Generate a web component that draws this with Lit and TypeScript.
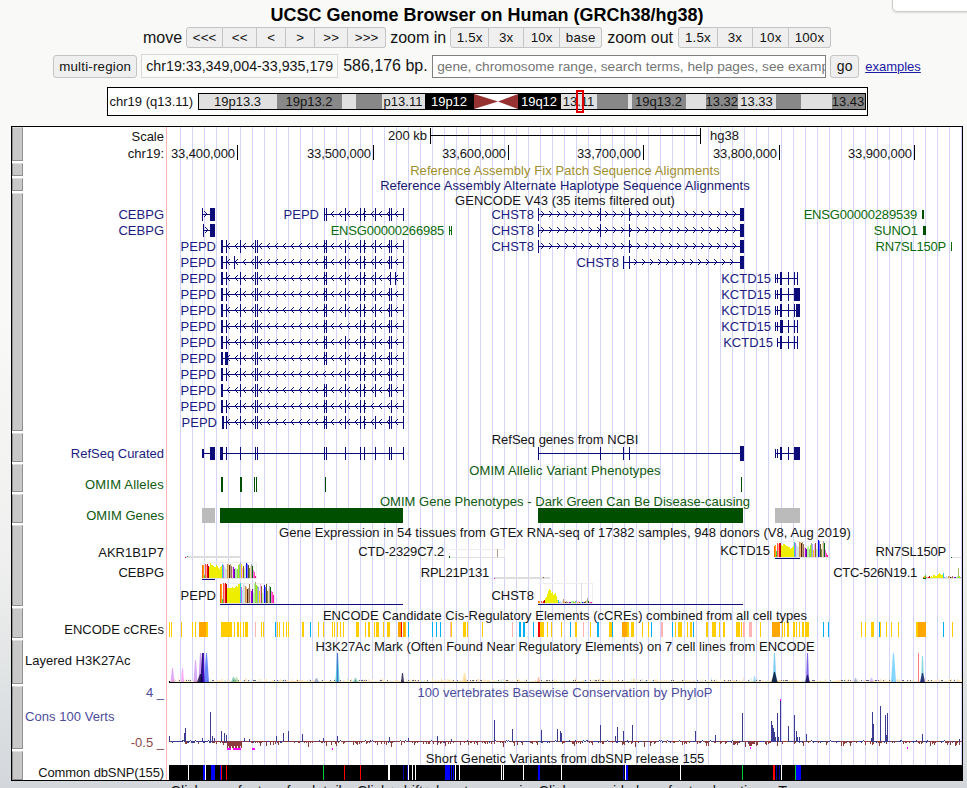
import { LitElement, html, css, svg } from "lit";
import { customElement } from "lit/decorators.js";

const NAVY = "#0b0b7a";
const LBL = "#1c1c80";
const GREEN = "#0b6b0b";
const DKG = "#005000";

class Paint {
  m = new Map<string, string>();
  r(c: string, x: number, y: number, w: number, h: number) {
    this.m.set(c, (this.m.get(c) || "") + `M${x} ${y}h${w}v${h}h${-w}z`);
  }
  render() {
    return [...this.m.entries()].map(([c, d]) => svg`<path class="crisp" fill=${c} d=${d}></path>`);
  }
}

let seed = 7;
const rnd = () => {
  seed = (seed * 16807) % 2147483647;
  return seed / 2147483647;
};

const GTEX = ["#FF6600","#FFAA00","#33DD33","#FF5555","#FFAA99","#FF0000","#AA0000",
  ...Array(13).fill("#EEEE00"),"#33CCCC","#CC66FF","#AAEEFF","#DDDDDD","#DDDDDD","#CC9955","#EEBB77",
  "#552200","#BB9988","#997755","#FFCCCC","#9900FF","#660099","#AAFF99","#AAFF99","#AABB66","#99FF00","#99BB88",
  "#AAAAFF","#FFD700","#FFAAFF","#995522","#AAFF99","#DDDDDD","#0000FF","#7777FF","#555522","#778855","#FFDD99",
  "#AAAAAA","#006600","#FF66FF","#FF5599","#FF00BB"];

const H_CEBPG = [13,13,3,14,13,14,12,11,15,13,13,12,11,11,13,12,10,9,11,12,14,13,11,10,9,14,14,13,14,12,11,11,9,10,9,9,13,14,16,14,10,12,9,13,15,14,13,10,12,14,12,8,6,2];
const H_PEPD = [19,19,4,20,19,20,19,15,15,15,15,15,16,15,15,16,17,16,19,19,20,16,13,19,18,17,16,14,15,19,14,12,14,10,19,21,18,17,16,12,19,17,10,14,18,16,19,12,14,17,16,12,11,8];
const H_KCTD = [11,12,6,14,13,14,14,12,11,13,13,12,11,11,10,10,8,9,10,11,15,14,12,11,10,15,15,14,15,13,10,9,8,10,11,8,12,14,13,7,13,14,8,13,17,16,13,8,14,16,14,7,4,2];
const H_CHST = [2,2,0,2,1,2,3,5,6,9,12,14,13,10,11,8,9,10,7,3,3,1,2,1,2,4,2,1,2,1,1,1,1,2,2,2,1,2,3,1,2,1,1,20,1,1,1,2,3,5,2,1,1,1];
const H_CTC = [1,2,3,1,1,1,2,1,2,1,3,3,2,2,3,4,5,4,3,3,5,1,1,2,1,2,2,1,1,2,1,1,1,1,2,10,2,1,1,3,6,3,1];

const PEPD_BASE = [226,240,255,257,324,326,345,360,364,375,389,391,403];

@customElement("track-image")
class TrackImage extends LitElement {
  static styles = css`
    :host { display: block; width: 939px; height: 653px; }
    svg { display: block; font-family: "Liberation Sans", Arial, sans-serif; font-size: 13px; }
    .crisp { shape-rendering: crispEdges; }
    .arrows { fill: none; stroke-width: 1; shape-rendering: crispEdges; }
  `;

  render() {
    const p = new Paint();
    const t: any[] = [];
    const txt = (x: number, y: number, s: string, a = "end", f = "#141414", ls = 0) =>
      t.push(svg`<text x=${x} y=${y} text-anchor=${a} fill=${f} letter-spacing=${ls}>${s}</text>`);
    let arrowsL = "", arrowsR = "";

    // guide lines
    for (let i = 0; i < 66; i++) p.r("#d4d4fb", Math.round(180 + 12.01 * i), 127, 1, 653);
    p.r("#ffb4b4", 166, 127, 1, 653);

    // ruler
    txt(164, 141, "Scale");
    txt(164, 158, "chr19:");
    txt(427, 140, "200 kb");
    txt(710, 140, "hg38", "start");
    p.r("#000", 431, 135, 270, 1);
    p.r("#000", 430, 128, 1, 16);
    p.r("#000", 700, 128, 1, 16);
    [[237,"33,400,000"],[373,"33,500,000"],[508,"33,600,000"],[643,"33,700,000"],[779,"33,800,000"],[914,"33,900,000"]].forEach(([x, s]: any) => {
      p.r("#000", x, 145, 1, 15);
      txt(x - 2, 158, s, "end", "#141414", -0.1);
    });

    const mid = (y: number, s: string, f: string, ls: number) => txt(565, y, s, "middle", f, ls);
    const INK = "#141414";
    mid(175, "Reference Assembly Fix Patch Sequence Alignments", "#a08f2e", 0.07);
    mid(190, "Reference Assembly Alternate Haplotype Sequence Alignments", "#16166f", 0.07);
    mid(205, "GENCODE V43 (35 items filtered out)", INK, 0.05);
    mid(444, "RefSeq genes from NCBI", INK, 0);
    mid(475, "OMIM Allelic Variant Phenotypes", "#0f5a0f", 0.1);
    mid(506, "OMIM Gene Phenotypes - Dark Green Can Be Disease-causing", "#0f5a0f", 0.03);
    mid(537, "Gene Expression in 54 tissues from GTEx RNA-seq of 17382 samples, 948 donors (V8, Aug 2019)", INK, 0.05);
    mid(620, "ENCODE Candidate Cis-Regulatory Elements (cCREs) combined from all cell types", INK, 0.02);
    mid(651, "H3K27Ac Mark (Often Found Near Regulatory Elements) on 7 cell lines from ENCODE", INK, 0);
    mid(697, "100 vertebrates Basewise Conservation by PhyloP", "#4b4b9c", 0.07);
    mid(763, "Short Genetic Variants from dbSNP release 155", INK, 0.07);

    // gene models
    const gene = (c: number, x0: number, x1: number, exons: number[], thick: number[][], dir: "l" | "r", arrowStart: number) => {
      p.r(NAVY, x0, c, x1 - x0, 1);
      exons.forEach((e) => p.r(NAVY, e, c - 6, 1, 13));
      thick.forEach(([a, b]) => p.r(NAVY, a, c - 6, b - a, 13));
      for (let a = arrowStart; a < x1 - 3; a += 8) {
        if (dir === "l") arrowsL += `M${a + 3} ${c - 3}L${a} ${c}L${a + 3} ${c + 3}`;
        else arrowsR += `M${a} ${c - 3}L${a + 3} ${c}L${a} ${c + 3}`;
      }
    };

    // CEBPG
    [[214, 202], [230, 203]].forEach(([c, s]) => {
      txt(164, c + 5, "CEBPG", "end", LBL);
      gene(c, s, 211, [s, 210], [[211, 215]], "r", s + 2);
    });
    // top PEPD
    txt(319, 219, "PEPD", "end", LBL);
    gene(214, 324, 403, PEPD_BASE.filter((x) => x >= 324), [], "l", 331);
    // PEPD rows
    const rows: { ex: number[]; th: number[][]; lab?: number }[] = [
      { ex: PEPD_BASE, th: [[221, 223]] },
      { ex: PEPD_BASE.map((x) => (x === 240 ? 234 : x)), th: [[221, 223]] },
      { ex: PEPD_BASE.map((x) => (x === 391 ? 395 : x === 389 ? 390 : x)), th: [[221, 223]] },
      { ex: PEPD_BASE, th: [[221, 223]] },
      { ex: PEPD_BASE, th: [[221, 223]] },
      { ex: PEPD_BASE.filter((x) => x !== 345), th: [[221, 223]] },
      { ex: PEPD_BASE, th: [[221, 223]] },
      { ex: PEPD_BASE.filter((x) => x !== 226), th: [[221, 223], [225, 228]] },
      { ex: PEPD_BASE.filter((x) => x !== 324 && x !== 326), th: [[221, 223]] },
      { ex: PEPD_BASE.filter((x) => x !== 226), th: [[221, 223]] },
      { ex: PEPD_BASE.filter((x) => x !== 375 && x !== 389), th: [[221, 223]] },
      { ex: PEPD_BASE, th: [[222, 224]], lab: 217 },
    ];
    rows.forEach((r, i) => {
      const c = 246 + 16 * i;
      txt(r.lab || 216, c + 5, "PEPD", "end", LBL);
      gene(c, 222, 403, r.ex, r.th, "l", 227);
    });
    // CHST8
    [214, 230, 246].forEach((c, i) => {
      txt(534, c + 5, "CHST8", "end", LBL);
      gene(c, 538, 741, i < 2 ? [538, 600, 629] : [538, 629], [[740, 744]], "r", 541);
    });
    txt(619, 267, "CHST8", "end", LBL);
    gene(262, 623, 741, [623, 629], [[740, 744]], "r", 634);
    // KCTD15
    const kc = (c: number, lab: number, short: number[], ex: number[], th: number[][]) => {
      txt(lab, c + 5, "KCTD15", "end", LBL);
      p.r(NAVY, short[0], c, 798 - short[0], 1);
      short.forEach((s) => p.r(NAVY, s, c - 4, 1, 9));
      ex.forEach((s) => p.r(NAVY, s, c - 6, 1, 13));
      th.forEach(([a, b]) => p.r(NAVY, a, c - 6, b - a, 13));
    };
    kc(278, 771, [775, 777], [788, 794, 797], [[780, 782]]);
    kc(294, 771, [775, 777], [788], [[780, 782], [794, 800]]);
    kc(310, 771, [775, 777], [788, 794], [[780, 782], [796, 800]]);
    kc(326, 771, [775, 777], [788, 797], [[780, 783], [794, 795]]);
    kc(342, 773, [777], [788, 794, 797], [[780, 782]]);
    // green genes
    txt(444, 235, "ENSG00000266985", "end", GREEN, -0.2);
    p.r(GREEN, 449, 226, 1, 9);
    p.r(GREEN, 451, 226, 1, 9);
    p.r(GREEN, 449, 230, 2, 1);
    txt(917, 219, "ENSG00000289539", "end", GREEN, -0.2);
    p.r(DKG, 922, 210, 2, 9);
    txt(918, 235, "SUNO1", "end", GREEN, -0.1);
    p.r(DKG, 923, 226, 3, 9);
    txt(946, 251, "RN7SL150P", "end", GREEN, -0.2);
    p.r(GREEN, 951, 242, 1, 9);

    // RefSeq
    txt(164, 458, "RefSeq Curated", "end", LBL, 0);
    p.r(NAVY, 202, 453, 9, 1);
    p.r(NAVY, 202, 449, 2, 9);
    p.r(NAVY, 210, 447, 1, 13);
    p.r(NAVY, 211, 447, 4, 13);
    p.r(NAVY, 221, 453, 182, 1);
    p.r(NAVY, 220, 447, 3, 13);
    PEPD_BASE.forEach((x) => p.r(NAVY, x, 447, 1, 13));
    p.r(NAVY, 538, 453, 202, 1);
    [538, 600, 623, 629].forEach((x) => p.r(NAVY, x, 447, 1, 13));
    p.r(NAVY, 740, 446, 4, 15);
    p.r(NAVY, 775, 453, 25, 1);
    p.r(NAVY, 775, 449, 1, 9);
    p.r(NAVY, 777, 449, 1, 9);
    p.r(NAVY, 780, 447, 2, 13);
    p.r(NAVY, 788, 447, 1, 13);
    p.r(NAVY, 794, 447, 6, 13);

    // OMIM
    txt(164, 489, "OMIM Alleles", "end", "#0f5a0f", 0.2);
    [[221, 2], [240, 2], [254, 1], [256, 1], [325, 1], [741, 1]].forEach(([x, w]) => p.r(DKG, x, 477, w, 15));
    txt(164, 520, "OMIM Genes", "end", "#0f5a0f", 0.05);
    p.r("#bbbbbb", 202, 508, 13, 15);
    p.r("#004f00", 220, 508, 183, 15);
    p.r("#004f00", 538, 508, 205, 15);
    p.r("#bbbbbb", 775, 508, 25, 15);

    // GTEx
    const chart = (x: number, base: number, hs: number[], frameH: number, lineTo?: number) => {
      p.r("#eeeeee", x, base - frameH, hs.length + 1, 1);
      p.r("#eeeeee", x + hs.length, base - frameH, 1, frameH + 1);
      p.r("#e2e2e2", x, base, hs.length + 1, 1);
      hs.forEach((h, i) => h && p.r(GTEX[i], x + i, base - h, 1, h));
      if (lineTo) p.r(NAVY, x + (x === 774 ? 1 : 0), base + 1, lineTo, 1);
    };
    txt(164, 557, "AKR1B1P7");
    p.r("#dddddd", 185, 556, 56, 2);
    p.r("#ff00bb", 185, 557, 1, 1);
    p.r("#33aa33", 187, 556, 1, 1);
    txt(444, 556, "CTD-2329C7.2", "end", "#141414", -0.15);
    p.r("#eeeeee", 449, 549, 55, 1);
    p.r("#eeeeee", 504, 549, 1, 8);
    p.r("#e2e2e2", 449, 557, 55, 1);
    p.r("#006600", 449, 556, 1, 2);
    p.r("#bb9988", 497, 549, 1, 8);
    txt(770, 555, "KCTD15");
    chart(774, 557, H_KCTD, 16, 25);
    txt(946, 556, "RN7SL150P", "end", "#141414", -0.2);
    p.r("#dddddd", 951, 557, 11, 1);
    p.r("#006600", 951, 557, 1, 1);
    txt(164, 577, "CEBPG");
    chart(202, 578, H_CEBPG, 16, 13);
    txt(489, 577, "RPL21P131", "end", "#141414", -0.2);
    p.r("#dddddd", 494, 577, 56, 2);
    p.r("#ff00bb", 494, 578, 1, 1);
    p.r("#995522", 543, 577, 1, 1);
    txt(917, 577, "CTC-526N19.1", "end", "#141414", -0.3);
    H_CTC.forEach((h, i) => p.r(GTEX[i], 923 + i, 578 - h, 1, h));
    p.r("#e2e2e2", 923, 578, 39, 1);
    p.r("#006600", 923, 578, 3, 1);
    txt(216, 600, "PEPD");
    chart(220, 603, H_PEPD, 20, 183);
    txt(534, 600, "CHST8");
    chart(538, 603, H_CHST, 20, 205);

    // cCRE
    txt(164, 634, "ENCODE cCREs");
    const Y = "#ffcd00", O = "#ffa700", B = "#00b0f0", K = "#ffb3b3", R = "#ff0000";
    const c1: any[] = [[508,510,Y],[514,516,Y],[544,546,Y],[577,580,Y],[584,587,Y],[597,618,O],[618,624,Y],[664,696,Y],[703,707,Y],[711,717,Y],[720,724,Y],[728,730,Y],[735,743,Y],[766,768,K],[782,784,Y],[788,790,Y],[826,829,B],[830,832,Y],[838,840,Y],[848,850,Y],[858,862,Y],[865,868,Y],[907,913,Y],[930,933,B],[955,958,Y],[970,974,Y],[995,998,Y],[1003,1005,Y],[1012,1014,Y],[1020,1023,Y],[1028,1030,Y],[1068,1078,Y],[1094,1098,Y],[1104,1109,Y],[1122,1125,Y],[1128,1138,Y],[1148,1152,Y],[1160,1169,Y],[1195,1203,O],[1204,1208,R],[1208,1213,O],[1216,1219,Y],[1224,1226,B],[1297,1300,B],[1308,1311,B],[1320,1323,B],[1350,1352,K],[1354,1356,Y],[1390,1398,Y],[1402,1406,Y]];
    const c2: any[] = [[5,8,Y],[96,100,K],[117,119,B],[121,125,B],[128,130,B],[132,135,B],[159,162,B],[174,179,R],[179,190,Y],[201,204,Y],[212,215,Y],[243,245,Y],[270,274,B],[284,291,Y],[308,312,K],[330,333,Y],[351,358,B],[387,395,Y],[396,400,B],[426,440,O],[440,447,Y],[452,460,Y],[486,490,Y],[503,505,Y],[513,516,B],[543,550,K],[576,579,B],[586,590,Y],[594,607,Y],[620,623,Y],[630,636,Y],[638,641,B],[678,685,Y],[696,707,Y],[718,722,Y],[730,735,Y],[768,780,Y],[783,787,Y],[790,795,K],[807,816,K],[839,843,Y],[876,900,O],[907,910,Y],[913,916,Y],[920,927,Y],[938,943,Y],[949,952,Y],[957,960,Y],[965,972,Y],[975,987,Y],[1030,1033,B],[1044,1047,B],[1144,1147,Y],[1155,1158,Y],[1173,1182,Y],[1196,1199,B],[1200,1204,Y],[1218,1221,Y],[1233,1236,Y],[1253,1256,Y],[1308,1313,Y],[1314,1322,O],[1322,1336,O],[1389,1392,B],[1415,1419,Y]];
    c1.forEach(([a, b, c]) => p.r(c, Math.round(a / 3), 622, Math.max(1, Math.round((b - a) / 3)), 15));
    c2.forEach(([a, b, c]) => p.r(c, Math.round(480 + a / 3), 622, Math.max(1, Math.round((b - a) / 3)), 15));

    // H3K27Ac
    txt(25, 665, "Layered H3K27Ac", "start");
    const peaks: any[] = [];
    const peak = (x: number, h: number, w: number, c: string, o = 0.55) =>
      peaks.push(svg`<path fill=${c} fill-opacity=${o} d="M${x - w} 682L${x} ${682 - h}L${x + 1} ${682 - h}L${x + 1 + w} 682z"></path>`);
    const noise = ["#ffe0b0", "#ffe8c8", "#cfe6f6", "#dff0d8", "#f0dcf6"];
    for (let x = 170; x < 962; x++) {
      const h = 1 + Math.floor(rnd() * rnd() * 3.5);
      p.r(noise[Math.floor(rnd() * rnd() * 5)], x, 682 - h, 1, h);
      if (rnd() < 0.15) p.r("#556688", x, 680, 1, 1);
    }
    peak(172, 14, 1.5, "#cc66ee"); peak(182, 14, 1, "#ee66ee"); peak(195, 22, 1.5, "#bb66ee");
    peak(200, 29, 1.5, "#aa44ee"); peak(202, 29, 1.5, "#110066", 0.9); peak(206, 29, 2, "#4466ff", 0.8);
    peak(200, 8, 3, "#000033", 0.75); peak(203, 29, 0.5, "#4400cc", 0.9); peak(233, 5, 2, "#33aa88"); peak(236, 5, 2, "#88cc88");
    peak(337, 29, 1.5, "#33bbdd", 0.8); peak(337, 29, 0, "#330099", 0.4); peak(355, 4, 2, "#44aa88");
    peak(402, 9, 1, "#111144", 0.8); peak(464, 9, 2, "#ffcc66"); peak(316, 4, 2, "#6688cc"); peak(538, 5, 1, "#ff8866");
    peak(754, 6, 1, "#66bbdd"); peak(774, 29, 1.5, "#55bbee", 0.7); peak(774, 10, 2.5, "#001133", 0.85);
    peak(807, 29, 1, "#5533dd", 0.75); peak(807, 7, 2, "#000044", 0.7);
    peak(893, 29, 2, "#66ccff", 0.8); peak(918, 29, 0, "#ff6666", 0.85); peak(922, 26, 1, "#66cccc", 0.75); peak(922, 9, 2, "#111166", 0.8);
    peak(871, 4, 2, "#aa88ee"); peak(855, 4, 1, "#6688cc");
    p.r("#000", 169, 681, 794, 2);

    // Conservation
    txt(164, 697, "4 _", "end", "#4b4b9c");
    txt(164, 747, "-0.5 _", "end", "#8b4a4a");
    txt(25, 721, "Cons 100 Verts", "start", "#4b4b9c", 0.05);
    const UP = "#3c3c90", DN = "#8c3c3c";
    let navy = true, run = 0;
    for (let x = 169; x < 962; x++) {
      if (run-- <= 0) {
        navy = !navy;
        const bias = x < 212 ? (navy ? 14 : 2) : x < 480 ? (navy ? 2 : 14) : (navy ? 6 : 10);
        run = Math.floor(rnd() * bias);
      }
      if (navy) p.r(UP, x, 741 - (rnd() < 0.18 ? 1 : 0), 1, rnd() < 0.18 ? 2 : 1);
      else p.r(DN, x, 741, 1, 1 + (rnd() < 0.45 ? 1 + Math.floor(rnd() * rnd() * 5) : 0));
    }
    const up1 = [[508,393],[533,410],[556,370],[552,385],[594,408],[606,400],[631,322],[637,393],[641,400],[664,378],[672,383],[678,390],[733,400],[747,402],[827,392],[850,385],[865,378],[905,388],[958,405],[970,398],[1012,392],[1110,405],[1168,395],[1225,400],[1310,393],[1353,402],[1400,405]];
    const up2 = [[43,345],[97,372],[184,375],[232,372],[241,378],[244,385],[360,360],[406,392],[412,366],[430,378],[457,360],[646,378],[706,390],[786,323],[874,349],[877,360],[880,370],[883,380],[886,395],[890,323],[895,395],[901,285],[925,363],[942,330],[947,378],[952,395],[957,395],[978,387],[1176,322],[1179,358],[1173,400],[1201,303],[1214,330],[1219,390],[1222,323],[1325,388],[1437,402]];
    up1.forEach(([z, y]) => p.r(UP, Math.round(z / 3), Math.round(605 + y / 3), 1, 742 - Math.round(605 + y / 3)));
    up2.forEach(([z, y]) => p.r(UP, Math.round(480 + z / 3), Math.round(605 + y / 3), 1, 742 - Math.round(605 + y / 3)));
    for (let x = 227; x < 242; x++) p.r(DN, x, 742, 1, x % 3 === 0 ? 4 : 6);
    p.r("#ff00ff", 227, 748, 4, 2); p.r("#ff00ff", 233, 748, 8, 2);
    p.r("#ff00ff", 252, 748, 3, 2);
    p.r("#ff00ff", 332, 748, 1, 2);
    p.r(DN, 748, 742, 6, 2); p.r(DN, 749, 744, 3, 2);
    p.r("#ff00ff", 750, 747, 1, 2);
    p.r("#ff00ff", 780, 699, 1, 2);
    p.r("#ff00ff", 907, 747, 1, 2);
    p.r(DN, 391, 742, 1, 5);

    // dbSNP
    txt(164, 777, "Common dbSNP(155)", "end", "#141414", -0.12);
    p.r("#000", 169, 765, 793, 15);
    const W = "#ffffff", BL = "#0000ff", DB = "#0000aa", G = "#00cc33", RD = "#ff0000";
    const s1: any[] = [[565,567,W],[609,614,BL],[616,618,W],[633,645,BL],[660,663,BL],[664,667,RD],[678,681,RD],[969,971,G],[1032,1035,RD],[1080,1083,RD],[1164,1170,W],[1210,1212,DB],[1222,1224,DB],[1225,1227,W],[1235,1238,W],[1245,1248,W],[1335,1350,BL],[1352,1356,BL],[1360,1362,BL],[1364,1366,W],[1376,1379,W]];
    const s2: any[] = [[63,65,W],[69,72,W],[130,132,W],[173,179,BL],[243,246,W],[430,434,DB],[435,437,W],[438,444,BL],[601,603,W],[786,790,G],[828,830,"#d4d4fb"],[879,886,RD],[888,890,DB],[897,900,DB],[903,905,W],[945,948,G],[948,963,BL]];
    s1.forEach(([a, b, c]) => p.r(c, Math.round(a / 3), 765, Math.max(1, Math.round((b - a) / 3)), 15));
    s2.forEach(([a, b, c]) => p.r(c, Math.round(480 + a / 3), 765, Math.max(1, Math.round((b - a) / 3)), 15));

    return html`<svg width="939" height="653" viewBox="23 127 939 653" xmlns="http://www.w3.org/2000/svg">
      ${p.render()}
      ${peaks}
      <path class="arrows" stroke=${NAVY} d=${arrowsL}></path>
      <path class="arrows" stroke=${NAVY} d=${arrowsR}></path>
      ${t}
    </svg>`;
  }
}

const BANDS: [number, string, string][] = [
  [78, "g", "19p13.3"], [65, "d", "19p13.2"], [14, "g", ""], [26, "d", ""], [43, "g", "p13.11"], [49, "k", "19p12"],
  [44, "c", ""], [43, "k", "19q12"], [36, "g", "13.11"], [31, "d", ""], [4, "g", ""], [54, "d", "19q13.2"],
  [20, "g", ""], [32, "d", "13.32"], [38, "g", "13.33"], [25, "d", ""], [31, "g", ""], [33, "d", "13.43"],
];
const SIDE = [34, 13, 13, 238, 29, 28, 29, 81, 30, 44, 63, 29];

@customElement("app-root")
class AppRoot extends LitElement {
  static styles = css`
    :host {
      display: block; position: relative; width: 967px; height: 788px; overflow: hidden;
      font-family: "Liberation Sans", Arial, sans-serif; color: #141414;
      background: linear-gradient(#f9f9f7 0%, #f9f9f7 40%, #eeefee 72%, #d3d7db 100%);
    }
    .corner {
      position: absolute; left: 892px; top: -4px; width: 90px; height: 14px; background: #fff;
      border: 1px solid #ccc; border-radius: 5px; box-shadow: 0 1px 2px rgba(0,0,0,.12);
    }
    .page { display: flex; flex-direction: column; align-items: center; padding-left: 7px; }
    h1 { margin: 0; height: 27px; padding-top: 5px; box-sizing: border-box; font-size: 18px; line-height: 20px; font-weight: bold; color: #000; }
    .row { display: flex; align-items: center; }
    .nav { height: 21px; gap: 4px; font-size: 16px; margin-bottom: 6px; }
    .wide { padding: 0 1px; }
    .group { display: flex; }
    .group button { height: 21px; border-radius: 0; border-left: 0; }
    .group button:first-child { border-left: 1px solid #c4c4c4; border-radius: 3px 0 0 3px; }
    .group button:last-child { border-radius: 0 3px 3px 0; }
    button {
      font: 13.33px "Liberation Sans", Arial, sans-serif; color: #141414; background: #efefef;
      border: 1px solid #c4c4c4; padding: 0; box-sizing: border-box; letter-spacing: .2px;
    }
    .search { height: 24px; margin-bottom: 9px; }
    .multi { width: 84px; height: 23px; border-radius: 3px; margin-right: 4px; }
    input { font-family: "Liberation Sans", Arial, sans-serif; box-sizing: border-box; margin: 0; outline: none; }
    .pos {
      width: 197px; height: 24px; border: 1px solid #d8d8d8; background: #fbfbf9; color: #141414;
      font-size: 14.25px; padding: 0 0 0 4px; margin-right: 5px;
    }
    .bp { font-size: 16px; width: 89px; }
    .term {
      width: 394px; height: 23px; border: 1px solid #808080; background: #fff;
      font-size: 13.7px; padding: 0 0 0 4px; margin-right: 4px;
    }
    .term::placeholder { color: #757575; opacity: 1; }
    .go { width: 29px; height: 23px; border-radius: 3px; font-size: 14px; margin-right: 6px; }
    a { font-size: 13px; color: #1a1aa6; text-decoration: underline; }
    .ideo {
      width: 761px; height: 29px; box-sizing: border-box; border: 1px solid #000; background: #fff;
      display: flex; align-items: center; font-size: 13px; margin-bottom: 10px; position: relative;
    }
    .ideo-label { width: 90px; padding-left: 2px; box-sizing: border-box; white-space: nowrap; }
    .bands { display: flex; height: 17px; border: 1px solid #000; box-sizing: border-box; }
    .band { height: 15px; line-height: 15px; text-align: center; overflow: hidden; white-space: nowrap; flex: none; }
    .g { background: #e0e0e0; }
    .d { background: #888888; }
    .k { background: #000; color: #fff; }
    .c { background: #fff; }
    .c svg { display: block; }
    .here { position: absolute; left: 468px; top: 2px; width: 8px; height: 23px; box-sizing: border-box; border: 2px solid #e00000; }
    .image {
      width: 952px; height: 655px; box-sizing: border-box; border: 1px solid #000; background: #fff;
      display: flex; align-items: flex-start;
    }
    .side { width: 11px; display: flex; flex-direction: column; gap: 2px; flex: none; }
    .side div { background: #c8c8c8; border: 1px solid #909090; border-top-color: #dddddd; box-sizing: border-box; }
    .hint { width: 632px; margin-right: 10px; padding-top: 2px; font-size: 14.4px; line-height: 16px; text-align: center; }
  `;

  render() {
    const b = (labels: [string, number][]) =>
      html`<div class="group">${labels.map(([l, w]) => html`<button style="width:${w}px">${l}</button>`)}</div>`;
    return html`
      <div class="corner"></div>
      <div class="page">
        <h1>UCSC Genome Browser on Human (GRCh38/hg38)</h1>
        <div class="row nav">
          <span>move</span>
          ${b([["<<<", 37], ["<<", 34], ["<", 29], [">", 29], [">>", 33], [">>>", 38]])}
          <span>zoom in</span>
          ${b([["1.5x", 39], ["3x", 35], ["10x", 36], ["base", 42]])}
          <span class="wide">zoom out</span>
          ${b([["1.5x", 40], ["3x", 35], ["10x", 36], ["100x", 42]])}
        </div>
        <div class="row search">
          <button class="multi">multi-region</button>
          <input class="pos" .value=${"chr19:33,349,004-33,935,179"} />
          <div class="bp">586,176 bp.</div>
          <input class="term" placeholder="gene, chromosome range, search terms, help pages, see examples" />
          <button class="go">go</button>
          <a href="#">examples</a>
        </div>
        <div class="ideo">
          <div class="ideo-label">chr19 (q13.11)</div>
          <div class="bands">
            ${BANDS.map(([w, c, l]) => html`<div class="band ${c}" style="width:${w}px">${c === "c"
              ? html`<svg width="44" height="15" viewBox="0 0 44 15"><path fill="#963232" d="M0 0L24 7.5L0 15zM44 0L24 7.5L44 15z"></path></svg>`
              : l}</div>`)}
          </div>
          <div class="here"></div>
        </div>
        <div class="image">
          <div class="side">${SIDE.map((h) => html`<div style="height:${h}px"></div>`)}</div>
          <track-image></track-image>
        </div>
        <div class="hint">Click on a feature for details. Click+shift+drag to zoom in. Click grey side bars for track options. To reorder tracks, drag the side bars up or down.</div>
      </div>
    `;
  }
}
